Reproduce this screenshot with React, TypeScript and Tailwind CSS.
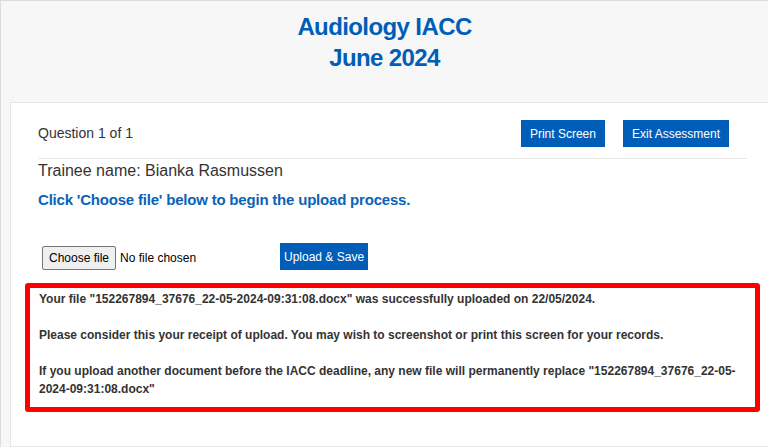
import React from "react";

const App: React.FC = () => {
  return (
    <div
      className="min-h-[447px] bg-[#f7f7f7] border-t border-l border-[#dcdcdc] overflow-hidden"
      style={{ fontFamily: '"Liberation Sans", Arial, sans-serif' }}
    >
      <header className="pt-[10px] h-[101px] text-center text-[#005eb8] font-bold text-[24px] leading-[31px] tracking-[-0.6px]">
        <h1>Audiology IACC</h1>
        <h1>June 2024</h1>
      </header>

      <main className="ml-[9px] bg-white border border-r-0 border-[#e6e6e6] min-h-[345px] pl-[27px] pr-[21px] pt-[17px]">
        <div className="flex items-center justify-between">
          <p className="text-[14px] text-[#333]">Question 1 of 1</p>
          <div className="flex gap-[18px] mr-[18px]">
            <button className="h-[27px] px-[9px] bg-[#005eb8] text-white text-[12px]">
              Print Screen
            </button>
            <button className="h-[27px] px-[9px] bg-[#005eb8] text-white text-[12px]">
              Exit Assessment
            </button>
          </div>
        </div>

        <hr className="mt-[11px] border-[#e8e8e8]" />

        <p className="text-[16px] leading-[24px] text-[#333]">
          Trainee name: Bianka Rasmussen
        </p>
        <p className="mt-[6px] text-[15px] leading-[22px] font-bold tracking-[-0.2px] text-[#0a63b8]">
          Click 'Choose file' below to begin the upload process.
        </p>

        <div className="flex items-end mt-[32px] pl-[4px]">
          <div className="flex items-center w-[238px]">
            <span className="h-[24px] px-[6px] flex items-center bg-[#efefef] border border-[#767676] rounded-[2px] text-[12px] text-black">
              Choose file
            </span>
            <span className="ml-[4px] text-[12px] text-black">No file chosen</span>
          </div>
          <button className="h-[27px] px-[4px] bg-[#005eb8] text-white text-[12px]">
            Upload &amp; Save
          </button>
        </div>

        <div className="mt-[13px] -ml-[13px] -mr-[13px] border-[5px] border-[#ff0000] rounded-[3px] pl-[9px] pr-[6px] pt-[2px] pb-[9px] text-[12px] leading-[18px] font-bold text-[#333]">
          <p>
            Your file "152267894_37676_22-05-2024-09:31:08.docx" was successfully uploaded on
            22/05/2024.
          </p>
          <p className="mt-[18px]">
            Please consider this your receipt of upload. You may wish to screenshot or print this
            screen for your records.
          </p>
          <p className="mt-[18px]">
            If you upload another document before the IACC deadline, any new file will permanently
            replace "152267894_37676_22-05-2024-09:31:08.docx"
          </p>
        </div>
      </main>
    </div>
  );
};

export default App;
